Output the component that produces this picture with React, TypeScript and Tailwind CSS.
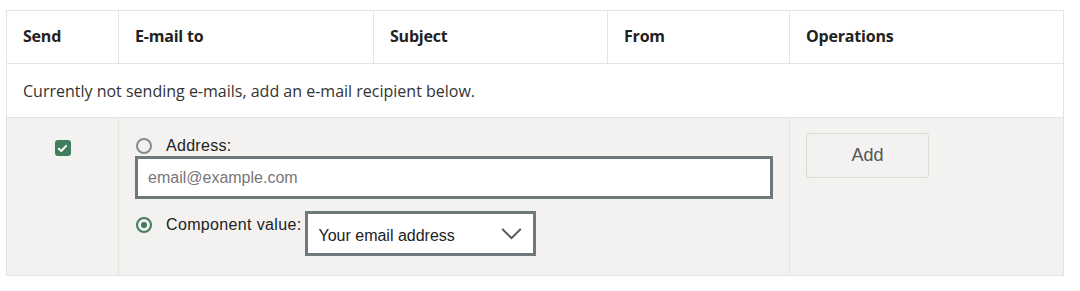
import React from "react";

const headers = [
  { label: "Send", w: "w-[112px]" },
  { label: "E-mail to", w: "w-[255px]" },
  { label: "Subject", w: "w-[234px]" },
  { label: "From", w: "w-[182px]" },
  { label: "Operations", w: "w-[274px]" },
];

function Radio({ checked }: { checked?: boolean }) {
  return checked ? (
    <span className="flex h-[16px] w-[16px] shrink-0 items-center justify-center rounded-full border-2 border-[#3f7d5c]">
      <span className="h-[6px] w-[6px] rounded-full bg-[#3f7d5c]" />
    </span>
  ) : (
    <span className="h-[16px] w-[16px] shrink-0 rounded-full border-2 border-[#8a8a8a]" />
  );
}

export default function App() {
  return (
    <div className="min-h-[291px] bg-white pl-[6px] pt-[10px] font-['Liberation_Sans',Arial,sans-serif]">
      <table className="w-[1057px] table-fixed border-collapse border border-[#e6e4e0] text-[#222]">
        <thead>
          <tr className="h-[53px]">
            {headers.map((h) => (
              <th
                key={h.label}
                className={`${h.w} border border-[#e6e4e0] px-[16px] pb-[2px] text-left align-middle font-['Open_Sans',sans-serif] text-[16px] font-bold tracking-[-0.2px]`}
              >
                {h.label}
              </th>
            ))}
          </tr>
        </thead>
        <tbody>
          <tr className="h-[54px]">
            <td colSpan={5} className="border border-[#e6e4e0] px-[16px] align-middle font-['Open_Sans',sans-serif] text-[16px] text-[#333]">
              Currently not sending e-mails, add an e-mail recipient below.
            </td>
          </tr>
          <tr className="h-[158px] bg-[#f3f2f0]">
            <td className="border border-[#e6e4e0] pt-[22px] align-top">
              <div className="flex justify-center">
                <span className="flex h-[16px] w-[16px] items-center justify-center rounded-[3px] bg-[#3f7d5c]">
                  <svg viewBox="0 0 16 16" className="h-[13px] w-[13px]">
                    <path d="M3.5 8.2l3 2.8 6-6.2" fill="none" stroke="#fff" strokeWidth="2.5" strokeLinecap="round" strokeLinejoin="round" />
                  </svg>
                </span>
              </div>
            </td>
            <td colSpan={3} className="border border-[#e6e4e0] px-[16px] pt-[18px] pb-[19px] align-top text-[16px] text-[#222]">
              <label className="flex h-[20px] items-center gap-[14px] pl-[1px]">
                <Radio />
                <span className="tracking-[0.3px]">Address:</span>
              </label>
              <input
                type="text"
                placeholder="email@example.com"
                className="mt-0 box-border h-[43px] w-[638px] border-[3px] border-[#6f787b] bg-white px-[10px] text-[16px] text-[#222] placeholder:text-[#777] outline-none"
              />
              <div className="mt-[12px] flex items-start">
                <label className="flex items-center gap-[14px] pl-[1px] pt-[2px]">
                  <Radio checked />
                  <span className="tracking-[0.35px]">Component value:</span>
                </label>
                <div className="ml-[4px] flex h-[45px] w-[231px] items-center justify-between border-[3px] border-[#6f787b] bg-white pl-[10px] pr-[10px]">
                  <span className="pt-[4px]">Your email address</span>
                  <svg viewBox="0 0 24 14" className="h-[13px] w-[23px]">
                    <path d="M2 2l10 10 10-10" fill="none" stroke="#555" strokeWidth="2.2" />
                  </svg>
                </div>
              </div>
            </td>
            <td className="border border-[#e6e4e0] px-[16px] pt-[15px] align-top">
              <button className="h-[45px] w-[123px] rounded-[3px] border border-[#dcdad6] bg-[#f3f2f0] text-[18px] text-[#555]">
                Add
              </button>
            </td>
          </tr>
        </tbody>
      </table>
    </div>
  );
}
